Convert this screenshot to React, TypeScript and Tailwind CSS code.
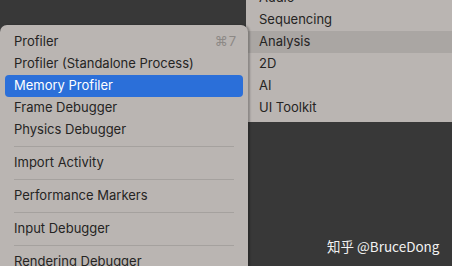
import { FC } from "react";

type Item = { label: string; shortcut?: string; active?: boolean } | "sep";

const TOOLS: Item[] = [
  { label: "Profiler", shortcut: "⌘7" },
  { label: "Profiler (Standalone Process)" },
  { label: "Memory Profiler", active: true },
  { label: "Frame Debugger" },
  { label: "Physics Debugger" },
  "sep",
  { label: "Import Activity" },
  "sep",
  { label: "Performance Markers" },
  "sep",
  { label: "Input Debugger" },
  "sep",
  { label: "Rendering Debugger" },
];

const CATEGORIES = ["Audio", "Sequencing", "Analysis", "2D", "AI", "UI Toolkit"];

const LeftMenu: FC = () => (
  <div className="absolute left-0 top-[25px] w-[248px] h-[260px] rounded-tl-[7px] rounded-tr-[7px] bg-[#bab5b2] pt-[6px] shadow-[2px_0_2px_rgba(0,0,0,0.25)] overflow-hidden">
    {TOOLS.map((item, i) =>
      item === "sep" ? (
        <div key={i} className="h-[11px] flex items-center px-[14px]">
          <div className="h-px w-full bg-[#a5a19e]" />
        </div>
      ) : (
        <div
          key={i}
          className={`h-[22px] mx-[5px] pl-[9px] pr-[6px] rounded-[4px] flex items-center justify-between text-[13px] ${
            item.active ? "bg-[#2b6fd9] text-white" : "text-[#252423]"
          }`}
        >
          <span>{item.label}</span>
          {item.shortcut && (
            <span className="text-[#8d8986] tracking-[1px]">{item.shortcut}</span>
          )}
        </div>
      ),
    )}
  </div>
);

const RightMenu: FC = () => (
  <div className="absolute left-[246px] top-[-13px] w-[206px] h-[135px] bg-[#bab5b2]">
    {CATEGORIES.map((c) => (
      <div
        key={c}
        className={`h-[22px] pl-[13px] flex items-center text-[13px] text-[#252423] ${
          c === "Analysis" ? "bg-[#aaa6a3]" : ""
        }`}
      >
        {c}
      </div>
    ))}
  </div>
);

export default function App() {
  return (
    <div
      className="relative w-[452px] h-[266px] overflow-hidden bg-[#383838]"
      style={{ fontFamily: "Inter, 'Noto Sans CJK SC', sans-serif" }}
    >
      <RightMenu />
      <LeftMenu />
      <div className="absolute left-[327px] top-[236px] text-[13.5px] text-[#f2f2f2] font-['Noto_Sans_CJK_SC',sans-serif]">
        知乎 @BruceDong
      </div>
    </div>
  );
}
